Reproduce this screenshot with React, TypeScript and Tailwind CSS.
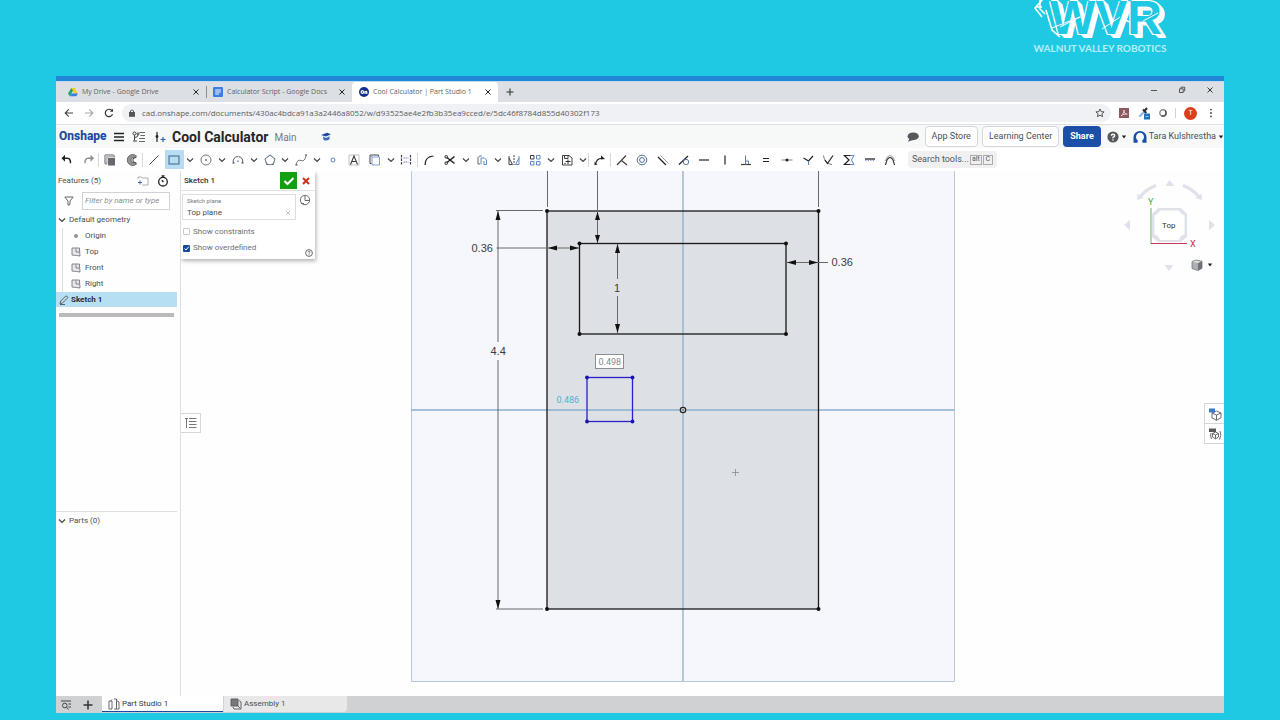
import type { ReactNode } from "react";

function Chevron({ className = "size-2.5" }: { className?: string }) {
  return (
    <svg viewBox="0 0 10 10" className={className} fill="none" stroke="#444" strokeWidth="1.2">
      <path d="M2 3.5 5 6.5 8 3.5" />
    </svg>
  );
}

function Caret() {
  return (
    <svg viewBox="0 0 6 4" className="h-1 w-1.5 shrink-0" fill="#222">
      <path d="M.8.5h4.4L3 3.4z" />
    </svg>
  );
}

function Close({ className = "size-2" }: { className?: string }) {
  return (
    <svg viewBox="0 0 8 8" className={className} fill="none" stroke="currentColor" strokeWidth="1">
      <path d="M1.5 1.5 6.5 6.5M6.5 1.5 1.5 6.5" />
    </svg>
  );
}

function Tool({ label, active, children }: { label: string; active?: boolean; children: ReactNode }) {
  return (
    <button
      type="button"
      aria-label={label}
      className={
        active
          ? "flex h-[19px] w-[19px] shrink-0 items-center justify-center bg-[#b5def1]"
          : "flex h-[19px] w-[19px] shrink-0 items-center justify-center"
      }
    >
      <svg viewBox="0 0 16 16" className="size-4" fill="none" stroke="#3c3f45" strokeWidth="1">
        {children}
      </svg>
    </button>
  );
}

function More({ label }: { label: string }) {
  return (
    <button type="button" aria-label={label} className="flex h-[19px] w-[9px] shrink-0 items-center justify-center">
      <Chevron className="size-2.5 shrink-0" />
    </button>
  );
}

function Rule() {
  return <span className="mx-px h-3.5 w-px shrink-0 bg-[#d5d7da]" />;
}

function Banner() {
  return (
    <header className="flex h-[76px] shrink-0 justify-end pr-[110px]">
      <div className="flex w-[140px] flex-col items-center">
        <div className="relative flex h-10 w-full items-end justify-end pr-2 pb-1.5">
          <svg viewBox="0 0 140 40" className="pointer-events-none absolute inset-0 size-full" fill="none" stroke="#fff" strokeWidth="1.6">
            <path d="M14-2 5 8 12 17M10 0v9l5 5M6 7h6" />
            <path d="M16 10 22 30 30 37M62 2l4 14M95 20l5 2v12" />
          </svg>
          <div className="relative flex gap-[3px] font-['Liberation_Sans',sans-serif] text-[48px] leading-[33px] font-bold text-[#20c9e3] [text-shadow:-1px_0_#fff,-1px_1px_#fff,0_1px_#fff,1px_-1px_#fff,1px_0_#fff,2px_0_#fff,2px_1px_#fff,3px_1px_#fff,3px_2px_#fff,4px_2px_#fff,4px_3px_#fff,5px_3px_#fff,5px_4px_#fff]">
            WVR
          </div>
          <svg viewBox="0 0 140 40" className="pointer-events-none absolute inset-0 size-full" fill="none" stroke="#fff">
            <path d="M22 28 50 17M30 27 54 15M72 29l18-12M113 21l15-8" />
          </svg>
        </div>
        <div className="mt-0.5 font-[Lato,sans-serif] text-[10px] leading-3 font-bold whitespace-nowrap text-[#b4effa]">
          WALNUT VALLEY ROBOTICS
        </div>
      </div>
    </header>
  );
}

const TAB_BOX = {
  first: "flex w-[150px] items-center gap-1 pr-1.5 pl-3",
  plain: "flex w-[145px] items-center gap-1 pr-1.5 pl-1.5",
  active: "flex w-[146px] items-center gap-1 rounded-t bg-white pr-1.5 pl-[7px]",
};

function BrowserTab({ title, kind, icon }: { title: string; kind: keyof typeof TAB_BOX; icon: ReactNode }) {
  return (
    <div className={TAB_BOX[kind]}>
      {icon}
      <span className="flex-1 truncate text-[#5f6368]">{title}</span>
      <button type="button" aria-label={`Close ${title}`} className="text-[#222]">
        <Close />
      </button>
    </div>
  );
}

function BrowserChrome() {
  return (
    <>
      <div className="flex h-[21px] shrink-0 border-t border-[#c5d9ee] bg-[#dcdfe4] font-['Open_Sans',sans-serif] text-[7px]">
        <BrowserTab
          kind="first"
          title="My Drive - Google Drive"
          icon={
            <svg viewBox="0 0 10 10" className="size-2.5 shrink-0">
              <path d="M3.3 1h3.3L3.4 6.6 1.8 9.3 0 6.5z" fill="#23a566" />
              <path d="M3.3 1h3.3L10 6.5H6.7z" fill="#fdc91f" />
              <path d="M3.4 6.5H10L8.3 9.3H1.8z" fill="#3d7de4" />
            </svg>
          }
        />
        <span className="my-1 w-px bg-[#8d9197]" />
        <BrowserTab
          kind="plain"
          title="Calculator Script - Google Docs"
          icon={
            <svg viewBox="0 0 10 10" className="size-2.5 shrink-0">
              <rect width="10" height="10" rx="1" fill="#3d7de4" />
              <path d="M2.2 3h5.6M2.2 5h5.6M2.2 7h3.8" stroke="#fff" />
            </svg>
          }
        />
        <BrowserTab
          kind="active"
          title="Cool Calculator | Part Studio 1"
          icon={
            <svg viewBox="0 0 10 10" className="size-2.5 shrink-0" fill="none" stroke="#fff" strokeWidth="1.2">
              <circle cx="5" cy="5" r="5" fill="#132f8e" stroke="none" />
              <circle cx="3.4" cy="5" r="1.3" />
              <path d="M6 7V4.8q1.8-1.2 1.8.4V7" />
            </svg>
          }
        />
        <button type="button" aria-label="New tab" className="ml-2 flex items-center">
          <svg viewBox="0 0 8 8" className="size-2" stroke="#333" strokeWidth="1.1">
            <path d="M4 .5v7M.5 4h7" />
          </svg>
        </button>
        <div className="mr-2.5 ml-auto flex items-center gap-5 pb-1 text-[#333]">
          <button type="button" aria-label="Minimize">
            <svg viewBox="0 0 8 8" className="size-2" stroke="#555"><path d="M1 4.5h6" /></svg>
          </button>
          <button type="button" aria-label="Restore">
            <svg viewBox="0 0 8 8" className="size-2" fill="none" stroke="#444" strokeWidth=".9"><path d="M1.5 2.8h3.7v3.7H1.5zM3 2.500V1.200h3.700v3.700H5.500" /></svg>
          </button>
          <button type="button" aria-label="Close window"><Close /></button>
        </div>
      </div>
      <div className="flex h-[22px] shrink-0 items-center bg-white pr-[11px] pl-2">
        <div className="flex items-center gap-2.5">
          <button type="button" aria-label="Back">
            <svg viewBox="0 0 10 10" className="size-2.5" fill="none" stroke="#444" strokeWidth="1.1"><path d="M9 5H1.200M4.800 1.300 1.200 5l3.600 3.700" /></svg>
          </button>
          <button type="button" aria-label="Forward">
            <svg viewBox="0 0 10 10" className="size-2.5" fill="none" stroke="#a5a8ad" strokeWidth="1.1"><path d="M1 5h7.800M5.200 1.300 8.800 5 5.200 8.700" /></svg>
          </button>
          <button type="button" aria-label="Reload">
            <svg viewBox="0 0 10 10" className="size-2.5" fill="none" stroke="#333" strokeWidth="1.2">
              <path d="M8.500 6.200A3.700 3.700 0 1 1 7.800 2.500" />
              <path d="M9 .8v3H6z" fill="#333" stroke="none" />
            </svg>
          </button>
        </div>
        <div className="ml-2 flex h-[18px] min-w-0 flex-1 items-center gap-1.5 rounded-full bg-[#eff1f4] px-1.5">
          <svg viewBox="0 0 8 8" className="size-2 shrink-0" fill="none" stroke="#555">
            <rect x="1.500" y="3.500" width="5" height="3.800" fill="#555" />
            <path d="M2.500 3.500V1.800q1.500-1.800 3 0v1.700" />
          </svg>
          <input
            aria-label="Address"
            readOnly
            value="cad.onshape.com/documents/430ac4bdca91a3a2446a8052/w/d93525ae4e2fb3b35ea9cced/e/5dc46f8784d855d40302f173"
            className="min-w-0 flex-1 bg-transparent font-['Open_Sans',sans-serif] text-[8px] text-[#5a5d62] outline-none"
          />
          <button type="button" aria-label="Bookmark">
            <svg viewBox="0 0 10 10" className="size-2.5" fill="none" stroke="#444" strokeWidth=".9"><path d="m5 1 1.200 2.700 2.900.2L6.900 5.800l.7 2.900L5 7.200 2.400 8.700l.7-2.900L.9 3.900l2.900-.2z" /></svg>
          </button>
        </div>
        <div className="ml-2 flex items-center gap-2">
          <svg viewBox="0 0 10 10" className="size-2.5" fill="none" stroke="#efd9d9" strokeWidth=".9">
            <rect width="10" height="10" fill="#8c5a60" stroke="none" />
            <path d="M2 8c2-1.500 3-4 3-6 0 3 1.500 4.300 3.200 4.200C6 5.800 4 6.300 2 8z" />
          </svg>
          <svg viewBox="0 0 14 14" className="size-3.5">
            <path d="M1.500 10 7 4.500 8.500 6 3 11.300z" fill="#8eb4d4" />
            <path d="M6 3.500 9.300 7M7.500 5 10 2" stroke="#2b2f36" strokeWidth="2" />
            <rect x="7" y="7.500" width="6" height="6" fill="#2273b8" />
            <path d="M8.500 10.500h3" stroke="#9fc8ee" />
          </svg>
          <svg viewBox="0 0 8 8" className="size-2" fill="none"><circle cx="4" cy="4" r="3.200" stroke="#8a8d8a" strokeWidth="1.400" /><path d="M6.200 2A3 3 0 0 1 2.500 6.600" stroke="#444" strokeWidth="1.200" /></svg>
          <span className="h-2.5 w-px bg-[#cfd2d6]" />
          <span className="flex size-[13px] items-center justify-center rounded-full bg-[#d9401c] font-[Roboto,sans-serif] text-[7px] text-white">T</span>
          <button type="button" aria-label="Browser menu" className="pl-1">
            <svg viewBox="0 0 4 10" className="h-2.5 w-1" fill="#444"><circle cx="2" cy="1.600" r=".9" /><circle cx="2" cy="5" r=".9" /><circle cx="2" cy="8.400" r=".9" /></svg>
          </button>
        </div>
      </div>
    </>
  );
}

function AppHeader() {
  return (
    <div className="flex h-6 shrink-0 items-center border-t border-[#dfe1e4] bg-[#f7f8f8] pl-[3px] text-[#4c4e52]">
      <a href="#home" className="w-12 pb-0.5 text-[12px] leading-4 font-extrabold text-[#1c4aa0]">Onshape</a>
      <div className="ml-[7px] flex items-center gap-2">
        <button type="button" aria-label="Menu">
          <svg viewBox="0 0 10 10" className="size-2.5" stroke="#222" strokeWidth="1.400"><path d="M0 1.500h10M0 5h10M0 8.500h10" /></svg>
        </button>
        <button type="button" aria-label="Versions and history">
          <svg viewBox="0 0 14 12" className="h-3 w-3.5" fill="none" stroke="#444" strokeWidth="1">
            <circle cx="2.500" cy="2.500" r="1.500" /><circle cx="6" cy="2.800" r="1" /><path d="M2.500 4v5.500M6 4q0 2.500-3.500 2.500M1 10h4" /><path d="M7.500 1.500H13M8.500 4.500H13M7 7.500h6M7 10.500h6" strokeWidth=".8" />
          </svg>
        </button>
        <button type="button" aria-label="Create version">
          <svg viewBox="0 0 12 12" className="size-3" fill="none" stroke="#222" strokeWidth="1.200">
            <path d="M3 1v10" /><circle cx="3" cy="5.500" r="1.400" fill="#222" stroke="none" /><path d="M6.500 8.500h5M9 6v5" stroke="#2462b5" />
          </svg>
        </button>
      </div>
      <h1 className="ml-1.5 text-[14px] leading-4 font-bold text-[#24262a]">Cool Calculator</h1>
      <span className="mt-0.5 ml-1.5 text-[10px] leading-4 text-[#777a7f]">Main</span>
      <button type="button" aria-label="Education plan" className="ml-6">
        <svg viewBox="0 0 10 10" className="size-2.5"><path d="M0 3 6 .8 10 2.200 5 4.600z" fill="#1c4aa0" /><path d="M2 4.500 5 6l3.500-1.800V7.200Q5.500 9.500 2.600 8z" fill="#3a6ac0" /></svg>
      </button>
      <div className="ml-auto flex items-center text-[9px]">
        <button type="button" aria-label="Comments">
          <svg viewBox="0 0 12 10" className="h-2.5 w-3" fill="#55585c"><ellipse cx="6.200" cy="4.300" rx="5.600" ry="3.900" /><path d="M3 6 .8 9.800 6 8z" /></svg>
        </button>
        <button type="button" className="ml-1.5 h-[21px] rounded-sm border border-[#d4d6d9] bg-white px-1.5">App Store</button>
        <button type="button" className="ml-1 h-[21px] rounded-sm border border-[#d4d6d9] bg-white px-1.5">Learning Center</button>
        <button type="button" className="ml-1 h-[21px] rounded-sm bg-[#1b4fa8] px-[7px] font-bold text-white">Share</button>
        <button type="button" aria-label="Help" className="ml-1.5 flex items-center gap-0.5">
          <svg viewBox="0 0 12 12" className="size-3" fill="none" stroke="#fff" strokeWidth="1.400"><circle cx="6" cy="6" r="5.600" fill="#55585c" stroke="none" /><path d="M4.300 4.800Q4.400 3.200 6 3.200T7.700 4.700Q7.700 5.500 6 6.300V7.300M6 8.200v1.300" /></svg>
          <Caret />
        </button>
        <button type="button" className="ml-1.5 flex items-center gap-0.5">
          <svg viewBox="0 0 14 14" className="size-3.5 shrink-0"><path d="M.5 12.800V7A6.500 6 0 0 1 13.500 7v5.800H9.500l-.3-2.300A4 4.200 0 1 0 4.800 10.500l-.3 2.300z" fill="#1b4fa8" /></svg>
          <span>Tara Kulshrestha</span>
          <Caret />
        </button>
      </div>
    </div>
  );
}

const BLUE = "#5f86c9";

function Toolbar() {
  return (
    <div className="flex h-[23px] shrink-0 items-center bg-white pl-px">
      <div className="flex w-10 shrink-0 justify-between">
        <Tool label="Undo"><path d="M6 2.800v7L2.500 6.300z" fill="#222" stroke="none" /><path d="M5.500 6.300h3q3.200.2 3 5" stroke="#222" strokeWidth="1.400" /></Tool>
        <Tool label="Redo"><path d="M10.500 2.800v7L14 6.300z" fill="#8b8e92" stroke="none" /><path d="M11 6.300H8q-3.200.2-3 5" stroke="#8b8e92" strokeWidth="1.400" /></Tool>
      </div>
      <Rule />
      <div className="flex w-[41px] shrink-0 justify-between">
        <Tool label="Extrude"><path d="M3 3h9v2M3 3v9h2" stroke="#888" /><path d="M3 3h7l3 2H5v7l-2-1z" fill="#d0d2d4" stroke="#777" strokeWidth=".6" /><rect x="6" y="6" width="7" height="7.500" fill="#66696d" stroke="none" /></Tool>
        <Tool label="Revolve"><path d="M12.500 4A5.500 5.500 0 1 0 12.500 12L10.500 10.300A2.500 2.500 0 1 1 10.500 5.700z" fill="#909397" stroke="#55585c" strokeWidth=".8" /><path d="M12.500 5.200 9 6.500v3.300l3.500 1.400" stroke="#444" /></Tool>
      </div>
      <Rule />
      <div className="flex w-[272px] shrink-0 items-center justify-between">
        <Tool label="Line"><path d="M3.500 12.500l9-9" /></Tool>
        <Tool label="Rectangle" active><rect x="3" y="4" width="10" height="8" stroke="#44608a" /></Tool>
        <More label="Rectangle options" />
        <Tool label="Circle"><circle cx="8" cy="8" r="5" stroke="#777" /><circle cx="8" cy="8" r=".6" fill={BLUE} stroke={BLUE} /></Tool>
        <More label="Circle options" />
        <Tool label="Arc"><path d="M3.500 11A4.800 4.800 0 1 1 12.500 11" stroke="#555" strokeDasharray="9 .8" /><path d="M8 8.500v1.500" stroke={BLUE} strokeWidth="1.500" /><path d="M2.500 11h2M11.500 11h2" /></Tool>
        <More label="Arc options" />
        <Tool label="Polygon"><path d="M8 3 13 6.800 11.200 12.500H4.800L3 6.800z" /><circle cx="8" cy="8.200" r="4.500" stroke="#9fb4dc" strokeWidth=".7" /></Tool>
        <More label="Polygon options" />
        <Tool label="Spline"><path d="M3 13Q4 7 8 8.500T13 3.500" stroke="#777" /><path d="M12 3h2M2.500 13h2" /></Tool>
        <More label="Spline options" />
        <Tool label="Point"><circle cx="8" cy="8" r="2" stroke={BLUE} /></Tool>
        <Tool label="Text"><path d="M3 3h10v10H3z" stroke="#999" strokeWidth=".6" /><path d="M4.500 12.500 8 4l3.500 8.500M5.800 9.500h4.400" strokeWidth="1.100" /></Tool>
        <Tool label="Use"><path d="M3 3h8.500v1.500M3 3v8.500h1.500" stroke="#444" /><path d="M5 5h7.500v8H5zM3 3l2 2" fill="#fff" stroke={BLUE} strokeWidth=".8" /></Tool>
        <More label="Use options" />
        <Tool label="Mirror constraint"><path d="M3.500 3v10M12.500 3v10" strokeDasharray="2.500 1" strokeWidth="1.200" /><path d="M5.500 6h5M5.500 10h5" stroke={BLUE} strokeDasharray="1.500 .6" /></Tool>
      </div>
      <Rule />
      <div className="flex w-[168px] shrink-0 items-center justify-between">
        <Tool label="Fillet"><path d="M4 13Q4 4.500 12.500 4" stroke="#222" strokeWidth="1.200" /></Tool>
        <Tool label="Trim"><path d="M5 5.500 12.500 11.500M5 10.500 12.500 4.500" stroke="#222" strokeWidth="1.600" /><circle cx="4.200" cy="4.800" r="1.300" stroke="#222" /><circle cx="4.200" cy="11.200" r="1.300" stroke="#222" /></Tool>
        <More label="Trim options" />
        <Tool label="Offset"><path d="M4 12V5.500Q5 3.500 7.500 4M4 12h2" stroke="#666" /><path d="M7 12.500V6h3.500l2 2v4.500H10V9" stroke={BLUE} /></Tool>
        <More label="Offset options" />
        <Tool label="Mirror"><path d="M3 4v8.500h3.500L3 6" /><path d="M8 3v10" strokeDasharray="2 1" /><path d="M13 4v8.500H9.500L13 6" stroke={BLUE} /></Tool>
        <Tool label="Linear pattern"><path d="M3.500 3.500h3.500V7H3.500z" /><path d="M9.500 3.500H13V7H9.500zM3.500 9.500h3.500V13H3.500zM9.500 9.500H13V13H9.500z" stroke={BLUE} /></Tool>
        <More label="Pattern options" />
        <Tool label="Import"><path d="M3.500 3.500h6.500L13 6v7H3.500z" stroke="#444" /><path d="M5.500 3.500V6.500h3.500V3.500" /><path d="M6.500 9.500h5M9 7.500v4.500" stroke="#333" /><path d="M5 11.500h2" stroke={BLUE} /></Tool>
        <More label="Import options" />
      </div>
      <Rule />
      <Tool label="Dimension"><path d="M3.500 12Q5 5.500 11 6.500" stroke="#222" strokeWidth="1.200" /><path d="M9 3.500l4 3.500-4 .5zM2.500 10l3 2.500-3 .8z" fill="#222" stroke="none" /></Tool>
      <Rule />
      <div className="flex w-[288px] shrink-0 justify-between">
        <Tool label="Coincident"><path d="M3 13 12 3.500M7.500 8.500 13 13" strokeWidth="1.200" /></Tool>
        <Tool label="Concentric"><circle cx="8" cy="8" r="4.800" stroke="#4b6698" /><circle cx="8" cy="8" r="2.400" stroke="#4b6698" /></Tool>
        <Tool label="Parallel"><path d="M3 5l8 8" stroke="#222" strokeWidth="1.200" /><path d="M5.500 3.500l8 8" stroke="#8a9cc0" /></Tool>
        <Tool label="Tangent"><path d="M3 12.500 12 4" stroke="#222" strokeWidth="1.200" /><circle cx="10" cy="10" r="2.700" stroke="#5c76a8" /></Tool>
        <Tool label="Horizontal"><path d="M3 8h10" stroke="#222" strokeWidth="1.200" /></Tool>
        <Tool label="Vertical"><path d="M8 3.500v9" stroke="#222" strokeWidth="1.200" /></Tool>
        <Tool label="Perpendicular"><path d="M3 12.500h10" strokeWidth="1.200" /><path d="M7.500 3.500v9M7.500 9h3v3" stroke="#667ba5" /></Tool>
        <Tool label="Equal"><path d="M5 6.500h6M5 9.500h6" stroke="#222" strokeWidth="1.200" /></Tool>
        <Tool label="Midpoint"><path d="M2.500 8h11" stroke="#888" /><circle cx="8" cy="8" r="1.500" fill="#222" stroke="none" /></Tool>
        <Tool label="Normal"><path d="M3.500 6 8.500 9 13 4" stroke="#222" strokeWidth="1.200" /><path d="M8.500 9v4" stroke={BLUE} /></Tool>
        <Tool label="Pierce"><path d="M3.500 3.500Q4.500 12 12 12.500" stroke="#777" /><path d="M13 3.500 7.500 11.500 5 8" stroke="#222" strokeWidth="1.200" /></Tool>
        <Tool label="Symmetric"><path d="M9 3.500H3.500L8 8l-4.500 4.500H9" stroke="#222" strokeWidth="1.200" /><path d="M9 3.500h4L10.500 8l2.500 4.500H9" stroke={BLUE} /></Tool>
        <Tool label="Fix"><path d="M3 7h10" stroke="#222" strokeWidth="1.300" /><path d="M3.500 9 4.500 7.500M6 9l1-1.500M8.500 9l1-1.500M11 9l1-1.500" stroke={BLUE} /></Tool>
        <Tool label="Curvature"><path d="M3.500 13Q5 5.500 8 5.500t4.500 7.500" stroke="#222" strokeWidth="1.200" /><path d="M3 9Q5 3.500 8 3.500T13 9" stroke="#888" strokeWidth=".8" /></Tool>
      </div>
      <button type="button" className="ml-2 flex h-[17px] shrink-0 items-center gap-px rounded-sm bg-[#f0f0f0] px-1 text-[9px] text-[#55585c]">
        <span>Search tools...</span>
        <kbd className="flex h-2.5 items-center border border-[#a9abae] px-px font-[Roboto,sans-serif] text-[7px]">alt</kbd>
        <kbd className="flex h-2.5 w-2.5 items-center justify-center border border-[#a9abae] font-[Roboto,sans-serif] text-[7px]">C</kbd>
      </button>
    </div>
  );
}

function PlaneIcon() {
  return (
    <svg viewBox="0 0 10 10" className="size-2.5 shrink-0" fill="#e7e8ea" stroke="#777a7f" strokeWidth=".9">
      <path d="M1 1h7.500v2L9 9 5.500 8.500 1 8z" />
      <path d="M5 1.500v3.500h3.500" fill="none" />
    </svg>
  );
}

function Sidebar() {
  return (
    <aside className="flex w-[125px] shrink-0 flex-col border-r border-[#dcdee1] pr-[3px] text-[8px] text-[#4c4e52]">
      <section className="flex min-h-0 flex-1 flex-col">
        <div className="flex h-5 items-center pr-2 pl-0.5">
          <h2 className="flex-1">Features (5)</h2>
          <button type="button" aria-label="New folder">
            <svg viewBox="0 0 12 10" className="h-2.5 w-3" fill="none" stroke="#999ca1"><path d="M1 3V1h3.500l1 1H11v7H5" strokeWidth=".8" /><path d="M1 6.500h4M3 4.500v4" stroke="#3d6fc0" /></svg>
          </button>
          <button type="button" aria-label="Regeneration times" className="ml-2">
            <svg viewBox="0 0 12 12" className="size-3" fill="none" stroke="#222" strokeWidth="1.300"><circle cx="6" cy="6.700" r="4.300" /><path d="M4.500.9h3M6 1v2M4.800 5.300 6.500 7" /></svg>
          </button>
        </div>
        <div className="flex h-[19px] items-center gap-2 pl-2">
          <svg viewBox="0 0 10 10" className="size-2.5 shrink-0" fill="none" stroke="#666"><path d="M.8 1h8.400L6 5v3.500L4 9.200V5z" /></svg>
          <input aria-label="Filter by name or type" placeholder="Filter by name or type" className="h-[18px] w-[88px] border border-[#d0d2d5] bg-white px-0.5 text-[8px] italic outline-none placeholder:text-[#8b8e93]" />
        </div>
        <div className="flex h-[18px] items-center gap-0.5 pt-px pl-px">
          <Chevron />
          <span>Default geometry</span>
        </div>
        <ul className="ml-1.5 border-l border-[#dcdee1] pl-2">
          <li className="flex h-4 items-center gap-1">
            <span className="flex w-2.5 justify-center"><span className="size-1 rounded-full bg-[#8f9297]" /></span>Origin
          </li>
          <li className="flex h-4 items-center gap-1"><PlaneIcon />Top</li>
          <li className="flex h-4 items-center gap-1"><PlaneIcon />Front</li>
          <li className="flex h-4 items-center gap-1"><PlaneIcon />Right</li>
        </ul>
        <div className="flex h-[15px] items-center gap-0.5 bg-[#b7dff3] pl-[3px] font-bold text-[#24303c]">
          <svg viewBox="0 0 10 10" className="size-2.5" fill="none" stroke="#555"><path d="M1 9l.8-3L7 .8 9 2.500 3.500 8zM1 9.500h5" strokeWidth=".9" /></svg>
          Sketch 1
        </div>
        <div className="mx-[3px] mt-1.5 h-1 bg-[#b9babc]" />
      </section>
      <section className="h-[185px] border-t border-[#dcdee1]">
        <div className="flex h-[18px] items-center gap-0.5 pl-px">
          <Chevron />
          <h2>Parts (0)</h2>
        </div>
      </section>
    </aside>
  );
}

function SketchDialog() {
  return (
    <form className="absolute top-0 left-0 w-[134px] bg-white text-[8px] text-[#4c4e52] shadow-[1px_2px_4px_rgba(0,0,0,0.3)]">
      <div className="flex h-5 items-center border-b border-[#e0e2e4] pl-[3px]">
        <span className="flex-1 font-medium text-[#2f3135]">Sketch 1</span>
        <button type="button" aria-label="Accept" className="flex size-[17px] items-center justify-center bg-[#12a012]">
          <svg viewBox="0 0 12 12" className="size-3" fill="none" stroke="#fff" strokeWidth="2"><path d="M1.500 6l3 3 6-6" /></svg>
        </button>
        <button type="button" aria-label="Cancel" className="mx-1 text-[#c8321c]">
          <svg viewBox="0 0 10 10" className="size-2.5" stroke="currentColor" strokeWidth="2"><path d="M2 2l6 6M8 2 2 8" /></svg>
        </button>
      </div>
      <div className="flex items-start gap-[3px] pt-[3px] pl-px">
        <label className="flex w-[114px] flex-col border border-[#dcdee1] px-1">
          <span className="h-[11px] text-[6px] leading-3 text-[#777a7f]">Sketch plane</span>
          <span className="flex items-center">
            <input readOnly value="Top plane" className="h-[13px] min-w-0 flex-1 bg-transparent outline-none" />
            <Close className="size-1.5 text-[#a9abae]" />
          </span>
        </label>
        <svg viewBox="0 0 12 12" className="size-3 shrink-0" fill="none" stroke="#66696e"><circle cx="6" cy="6" r="4.700" /><path d="M6 2v4.500h4.500M2 9.500h3" /></svg>
      </div>
      <label className="flex h-[23px] items-center gap-[3px] pl-0.5 text-[#6c6f74]">
        <input type="checkbox" className="size-[7px] appearance-none rounded-[1px] border border-[#c9cbce]" />
        Show constraints
      </label>
      <div className="flex h-4 items-center px-0.5 pb-0.5 text-[#6c6f74]">
        <label className="flex flex-1 items-center gap-[3px] pb-1">
          <span className="relative flex size-[7px]">
            <input type="checkbox" defaultChecked className="size-[7px] appearance-none rounded-[1px] bg-[#174a9c]" />
            <svg viewBox="0 0 7 7" className="pointer-events-none absolute inset-0" fill="none" stroke="#fff"><path d="M1.500 3.500 3 5l2.800-3.300" /></svg>
          </span>
          Show overdefined
        </label>
        <button type="button" aria-label="Sketch help" className="self-end">
          <svg viewBox="0 0 8 8" className="size-2" fill="none" stroke="#66696e"><circle cx="4" cy="4" r="3.400" /><path d="M2.900 3.200Q3 2.200 4 2.200t1 1Q5 3.700 4 4.200v.6M4 5.300v1" strokeWidth=".9" /></svg>
        </button>
      </div>
    </form>
  );
}

function SketchCanvas() {
  const corners = [[547, 211], [818.5, 211], [547, 609], [818.5, 609], [579.5, 243.5], [786, 243.5], [579.5, 334], [786, 334]];
  const square = [[587, 377.5], [632.5, 377.5], [587, 421.5], [632.5, 421.5]];
  return (
    <svg viewBox="181 171 1043 525" className="absolute inset-0 size-full" fontFamily="'Liberation Sans', sans-serif" fontSize="11" fill="none">
      <path d="M411.500 160V681.500H954.500V160" fill="#f5f7fc" stroke="#b4c8e0" />
      <rect x="547" y="211" width="271.500" height="398" fill="#dde0e4" />
      <path d="M683 160V681M411 410H954.500" stroke="#8dafcb" strokeWidth="1.300" />
      <g stroke="#17181a" strokeWidth="1.300">
        <rect x="547" y="211" width="271.500" height="398" />
        <rect x="579.500" y="243.500" width="206.500" height="90.500" />
      </g>
      <path d="M547.500 160V207M818.500 160V207M597.500 160V243M496 210.500H543M496 609H543M498 211V342M498 360V609M496.500 248H579M617.500 244V279M617.500 296V333M786 262.500H828" stroke="#66696e" />
      <g fill="#111">
        <path d="M498 211l2.500 9h-5zM498 609l2.500-9h-5zM597.500 212l2.500 8h-5zM597.500 243l2.500-8h-5zM617.500 244l2.500 9h-5zM617.500 333l2.500-9h-5zM548 248l9-2.500v5zM579 248l-9-2.500v5zM787 262.500l9-2.500v5zM818 262.500l-9-2.500v5z" />
        {corners.map(([x, y]) => <circle key={`${x}-${y}`} cx={x} cy={y} r="2" />)}
      </g>
      <g fill="#3b3d41">
        <text x="471.500" y="252">0.36</text>
        <text x="831.500" y="266">0.36</text>
        <text x="490.500" y="355">4.4</text>
        <text x="614" y="292">1</text>
      </g>
      <rect x="587" y="377.500" width="45.500" height="44" stroke="#2a22c4" strokeWidth="1.300" />
      <g fill="#1c12b4">
        {square.map(([x, y]) => <circle key={`${x}-${y}`} cx={x} cy={y} r="1.900" />)}
      </g>
      <rect x="595.500" y="354.500" width="28" height="14" fill="#fff" stroke="#8b8e93" />
      <text x="598.500" y="365" fontFamily="Roboto, sans-serif" fontSize="9" fill="#85888d">0.498</text>
      <text x="556.500" y="403" fontFamily="Roboto, sans-serif" fontSize="9" fill="#4fb4d4">0.486</text>
      <circle cx="683" cy="410" r="2.700" fill="#dde0e4" stroke="#222" strokeWidth="1.200" />
      <circle cx="683" cy="410" r=".8" fill="#222" />
      <path d="M735.500 469v7M732 472.500h7" stroke="#85888d" strokeWidth=".8" />
    </svg>
  );
}

function ViewCube() {
  return (
    <div className="absolute top-2 right-2 flex w-[94px] flex-col">
      <svg viewBox="1122 179 94 80" className="h-20 w-full" fontFamily="Roboto, sans-serif" fontSize="9">
        <g fill="#dfe2e9">
          <path d="M1169.500 180l5 6h-9zM1124 225l6-5v10zM1215 225l-6-5v10z" />
          <path d="M1137 200l.5-6.500 6 4.500zM1202 200l-.5-6.500-6 4.500z" />
          <path d="M1158 208h23l6 6v23l-6 5h-23l-6-5v-23z" />
        </g>
        <path d="M1140 197q6-8 16-11.500M1199 197q-6-8-16-11.500" fill="none" stroke="#dfe2e9" strokeWidth="3" />
        <path d="M1160 210.500h19q1 3 5.500 5v19q-4.500 1-5.500 5.500h-19q-1-4.500-5.500-5.500v-19q4.500-2 5.500-5z" fill="#fff" />
        <path d="M1151 208v36" stroke="#6cb86c" />
        <path d="M1151 243.500h36" stroke="#c23d5a" />
        <text x="1148" y="205" fill="#3fae3f">Y</text>
        <text x="1190" y="247" fill="#c8284a">X</text>
        <text x="1162" y="228" fontSize="8" fill="#333">Top</text>
      </svg>
      <svg viewBox="0 0 10 6" className="mt-1.5 ml-[42px] h-1.5 w-2.5" fill="#dfe2e9"><path d="M.5 0h9L5 6z" /></svg>
      <button type="button" aria-label="View options" className="-mt-3 mr-[3px] flex items-center gap-1 self-end">
        <svg viewBox="0 0 12 12" className="size-3"><path d="M1 2.500 5 1l6 1.200L7 4z" fill="#d8dadc" /><path d="M1 2.500 7 4v7.500L1 9.500z" fill="#aeb1b4" /><path d="M7 4l4-1.800v7L7 11.500z" fill="#6f7276" /><path d="M1 2.500 5 1l6 1.200v7L7 11.500 1 9.500z" fill="none" stroke="#66696e" strokeWidth=".7" /></svg>
        <Caret />
      </button>
    </div>
  );
}

function Viewport() {
  return (
    <main className="relative min-w-0 flex-1 overflow-hidden">
      <SketchCanvas />
      <SketchDialog />
      <button type="button" aria-label="Toggle feature list" className="absolute top-[242px] left-0 flex size-5 items-center justify-center border border-l-0 border-[#d4d6d9] bg-white">
        <svg viewBox="0 0 12 12" className="size-3" stroke="#66696e" strokeWidth=".9"><path d="M1.500 1v10M0 1.500h3M4 1.500h7.500M4 4.500h7.500M4 7.500h7.500M4 10.500h7.500" /></svg>
      </button>
      <ViewCube />
      <div className="absolute top-[232px] right-0 flex w-5 flex-col border border-r-0 border-[#d4d6d9] bg-white">
        {["Appearance panel", "Display states"].map((label, i) => (
          <button key={label} type="button" aria-label={label} className="flex h-5 items-center justify-center border-b border-[#d4d6d9] last:h-[19px] last:border-b-0">
            <svg viewBox="0 0 14 14" className="size-3.5" fill="none" stroke="#44474c" strokeWidth=".8">
              {i === 0 ? (
                <>
                  <path d="M8.500 4 13 6v4.800L8.500 13.300 4 10.800V6zM4 6l4.500 2L13 6M8.500 8v5" fill="#fff" />
                  <path d="M1 1.500h6v4H1z" fill="#3b78cf" stroke="none" />
                </>
              ) : (
                <>
                  <path d="M7.500 5 10.500 6.500v3.500l-3 1.800-3-1.800V6.500zM4.500 6.500l3 1.500 3-1.500M7.500 8v3.500M3 6q-1 3 .5 6M12 4q2 4-.5 8.500" />
                  <path d="M1 1.500h7v3.500H1z" fill="#55585c" stroke="none" />
                </>
              )}
            </svg>
          </button>
        ))}
      </div>
    </main>
  );
}

function DocumentTabs() {
  return (
    <nav className="flex h-[17px] shrink-0 bg-[#d0d1d2] text-[8px] text-[#4c4e52]">
      <button type="button" aria-label="Tab manager" className="ml-1 flex items-center">
        <svg viewBox="0 0 12 12" className="size-3" fill="none" stroke="#444"><path d="M1 2h10M8.500 5H11M8.500 8H11" /><circle cx="4.800" cy="6.500" r="2.300" /><path d="M6.500 8.200 8.500 10.500" /></svg>
      </button>
      <button type="button" aria-label="Add tab" className="ml-2.5 flex items-center">
        <svg viewBox="0 0 12 12" className="size-3" stroke="#333" strokeWidth="1.500"><path d="M6 1.500v9M1.500 6h9" /></svg>
      </button>
      <a href="#part-studio-1" className="ml-2 flex h-4 w-[121px] items-center gap-0.5 border-b border-[#1b4a9c] bg-white pl-1.5 text-[#33363a]">
        <svg viewBox="0 0 12 12" className="size-3" fill="none" stroke="#55585c" strokeWidth=".9"><path d="M1 3h3v8H1zM6 1h2.500v10H6M8.500 2.500 11 4v7H8.500M2.500 3 4 1.500" /></svg>
        Part Studio 1
      </a>
      <a href="#assembly-1" className="ml-px flex h-4 w-[123px] items-center gap-0.5 rounded-br-sm bg-[#e8e8e9] pl-1.5">
        <svg viewBox="0 0 12 12" className="size-3" fill="none" stroke="#55585c" strokeWidth=".9"><path d="M1 1h7v7H1z" fill="#77797d" /><path d="M3 9l1 2h7V4L9 2.500M8 8l2 2" /></svg>
        Assembly 1
      </a>
    </nav>
  );
}

export default function App() {
  return (
    <div className="flex h-screen flex-col overflow-hidden bg-[#20c9e3] pb-[7px] font-[Roboto,sans-serif]">
      <Banner />
      <div className="mx-14 flex min-h-0 flex-1 flex-col border-t-5 border-[#1f86d8] bg-[#fefefe]">
        <BrowserChrome />
        <AppHeader />
        <Toolbar />
        <div className="flex min-h-0 flex-1">
          <Sidebar />
          <Viewport />
        </div>
        <DocumentTabs />
      </div>
    </div>
  );
}
